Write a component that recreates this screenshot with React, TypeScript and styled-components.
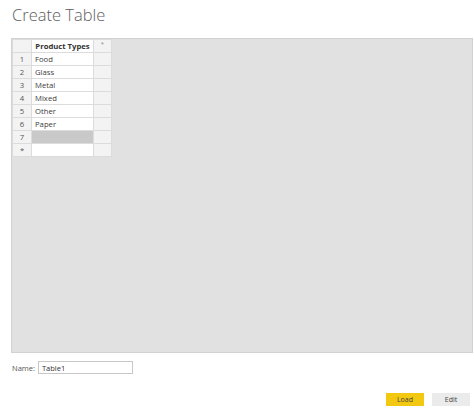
import React from "react";
import styled, { createGlobalStyle } from "styled-components";

const Global = createGlobalStyle`
  html, body { margin: 0; padding: 0; background: #ffffff; }
  body { font-family: "Open Sans", "Noto Sans", sans-serif; }
`;

const Page = styled.div`
  width: 474px;
  height: 413px;
  box-sizing: border-box;
  display: flex;
  flex-direction: column;
  padding: 4px 1px 0 11px;
`;

const Title = styled.h1`
  margin: 0 0 0 1px;
  height: 34px;
  font-size: 16.5px;
  font-weight: 300;
  color: #5e5e5e;
  line-height: 22px;
`;

const Canvas = styled.div`
  height: 315px;
  box-sizing: border-box;
  background: #e1e1e1;
  border: 1px solid #d2d2d2;
  display: flex;
  align-items: flex-start;
`;

const Table = styled.table`
  border-collapse: collapse;
  font-size: 7.7px;
  color: #3c3c3c;
  background: #ffffff;
`;

const Cell = styled.td<{ $kind?: "num" | "data" | "star" | "empty" }>`
  height: 13px;
  padding: 0 3px;
  border: 1px solid #dcdcdc;
  box-sizing: border-box;
  line-height: 12px;
  white-space: nowrap;
  background: ${(p) =>
    p.$kind === "num" || p.$kind === "star"
      ? "#f3f3f3"
      : p.$kind === "empty"
      ? "#c9c9c9"
      : "#ffffff"};
  color: ${(p) => (p.$kind === "num" ? "#555555" : "#3c3c3c")};
  text-align: ${(p) => (p.$kind === "num" ? "center" : "left")};
  width: ${(p) =>
    p.$kind === "num" ? "19px" : p.$kind === "star" ? "18px" : "62px"};
`;

const HeadCell = styled.th<{ $kind?: "corner" | "col" | "star" }>`
  height: 13px;
  padding: 0 3px;
  border: 1px solid #dcdcdc;
  box-sizing: border-box;
  background: ${(p) => (p.$kind === "col" ? "#ffffff" : "#f3f3f3")};
  font-weight: ${(p) => (p.$kind === "col" ? 700 : 400)};
  font-size: ${(p) => (p.$kind === "star" ? "6px" : "7.7px")};
  color: ${(p) => (p.$kind === "star" ? "#888888" : "#333333")};
  text-align: center;
  vertical-align: ${(p) => (p.$kind === "star" ? "top" : "middle")};
  line-height: ${(p) => (p.$kind === "star" ? "9px" : "12px")};
  width: ${(p) =>
    p.$kind === "corner" ? "19px" : p.$kind === "star" ? "18px" : "62px"};
`;

const NameRow = styled.div`
  display: flex;
  align-items: center;
  gap: 3px;
  margin: 8px 0 0 1px;
`;

const Label = styled.label`
  font-size: 7.5px;
  color: #555555;
`;

const Input = styled.input`
  width: 95px;
  height: 13px;
  box-sizing: border-box;
  border: 1px solid #c8c8c8;
  padding: 0 3px;
  font-family: "Open Sans", "Noto Sans", sans-serif;
  font-size: 7.5px;
  color: #333333;
  outline: none;
`;

const Footer = styled.div`
  display: flex;
  justify-content: flex-end;
  gap: 8px;
  margin: 19px 3px 0 0;
`;

const Button = styled.button<{ $primary?: boolean }>`
  width: 38px;
  height: 13px;
  border: none;
  padding: 0;
  font-family: "Open Sans", "Noto Sans", sans-serif;
  font-size: 7px;
  color: #444444;
  background: ${(p) => (p.$primary ? "#f2c811" : "#ebebeb")};
`;

const rows = ["Food", "Glass", "Metal", "Mixed", "Other", "Paper"];

export default function App() {
  return (
    <>
      <Global />
      <Page>
        <Title>Create Table</Title>
        <Canvas>
          <Table>
            <thead>
              <tr>
                <HeadCell $kind="corner" />
                <HeadCell $kind="col">Product Types</HeadCell>
                <HeadCell $kind="star">*</HeadCell>
              </tr>
            </thead>
            <tbody>
              {rows.map((r, i) => (
                <tr key={r}>
                  <Cell $kind="num">{i + 1}</Cell>
                  <Cell $kind="data">{r}</Cell>
                  <Cell $kind="star" />
                </tr>
              ))}
              <tr>
                <Cell $kind="num">7</Cell>
                <Cell $kind="empty" />
                <Cell $kind="star" />
              </tr>
              <tr>
                <Cell $kind="num">*</Cell>
                <Cell $kind="data" />
                <Cell $kind="star" />
              </tr>
            </tbody>
          </Table>
        </Canvas>
        <NameRow>
          <Label>Name:</Label>
          <Input defaultValue="Table1" />
        </NameRow>
        <Footer>
          <Button $primary>Load</Button>
          <Button>Edit</Button>
        </Footer>
      </Page>
    </>
  );
}
